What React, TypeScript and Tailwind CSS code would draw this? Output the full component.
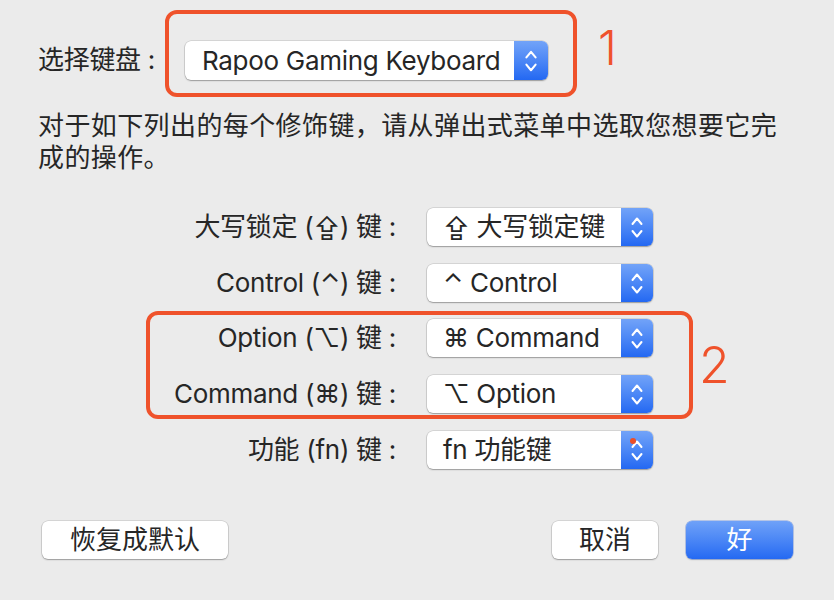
import React from "react";

const FONT = `Inter, "Noto Sans CJK SC", "DejaVu Sans", sans-serif`;

function Stepper({ dot = false, wide = false }: { dot?: boolean; wide?: boolean }) {
  return (
    <div
      className={`relative h-full ${wide ? "w-[34px]" : "w-[32px]"} shrink-0 rounded-r-[6px] bg-gradient-to-b from-[#72a3f8] to-[#2368f2]`}
    >
      <svg viewBox="0 0 32 38" className="absolute inset-0 h-full w-full" fill="none">
        <path d="M11.5 16 L16 10.5 L20.5 16" stroke="white" strokeWidth="2" strokeLinecap="round" strokeLinejoin="round" />
        <path d="M11.5 23 L16 28.5 L20.5 23" stroke="white" strokeWidth="2" strokeLinecap="round" strokeLinejoin="round" />
      </svg>
      {dot ? (
        <span className="absolute left-[9px] top-[7px] h-[6px] w-[6px] rounded-full bg-[#ec4f27]" />
      ) : null}
    </div>
  );
}

function PopUp({ label, className = "" }: { label: string; className?: string }) {
  return (
    <div
      className={`flex h-[38px] items-stretch rounded-[6px] bg-white shadow-[0_0_0_0.5px_rgba(0,0,0,0.18),0_1px_1.5px_rgba(0,0,0,0.28)] ${className}`}
    >
      <div className="flex flex-1 items-center whitespace-nowrap pl-[16px] text-[26px] leading-none tracking-[-0.3px] text-[#262626]">
        {label}
      </div>
      <Stepper dot={label.startsWith("fn")} />
    </div>
  );
}

function Row({ label, value, labelWidth }: { label: string; value: string; labelWidth: string }) {
  return (
    <div className="flex h-[38px] items-center">
      <div
        className={`${labelWidth} whitespace-nowrap pr-[2px] text-right text-[26px] leading-none tracking-[-0.3px] text-[#262626]`}
      >
        {label}
      </div>
      <PopUp label={value} className="ml-[29px] w-[226px]" />
    </div>
  );
}

function Button({ children, primary = false, className = "" }: { children: React.ReactNode; primary?: boolean; className?: string }) {
  return (
    <button
      type="button"
      className={`flex h-[38px] items-center justify-center rounded-[6px] text-[26px] leading-none ${
        primary
          ? "bg-gradient-to-b from-[#6fa1f8] to-[#2469f2] text-white shadow-[0_0_0_0.5px_rgba(30,90,220,0.5),0_1px_1.5px_rgba(0,0,0,0.2)]"
          : "bg-white text-[#262626] shadow-[0_0_0_0.5px_rgba(0,0,0,0.18),0_1px_1.5px_rgba(0,0,0,0.28)]"
      } ${className}`}
    >
      {children}
    </button>
  );
}

export default function App() {
  return (
    <div className="h-[600px] w-[834px] overflow-hidden bg-[#ebebeb]" style={{ fontFamily: FONT }}>
      {/* keyboard picker */}
      <div className="flex items-start pt-[10px]">
        <div className="mt-[31px] w-[165px] whitespace-nowrap pl-[38px] text-[26px] leading-[38px] tracking-[-0.3px] text-[#262626]">
          选择键盘 :
        </div>
        <div className="rounded-[12px] border-4 border-[#ef522b] pb-[13px] pl-[16px] pr-[25px] pt-[27px]">
          <div className="flex h-[39px] w-[363px] items-stretch rounded-[6px] bg-white shadow-[0_0_0_0.5px_rgba(0,0,0,0.18),0_1px_1.5px_rgba(0,0,0,0.28)]">
            <div className="flex flex-1 items-center pl-[17px] text-[26px] leading-none tracking-[-0.3px] text-[#262626]">
              Rapoo Gaming Keyboard
            </div>
            <Stepper wide />
          </div>
        </div>
        <div className="ml-[21px] mt-[14px] text-[48px] font-light leading-none text-[#ef522b]">1</div>
      </div>

      <p className="mt-[13px] w-[798px] pl-[38px] text-[26px] leading-[32px] tracking-[0.4px] text-[#262626]">
        对于如下列出的每个修饰键，请从弹出式菜单中选取您想要它完成的操作。
      </p>

      {/* modifier rows */}
      <div className="mt-[34px] flex flex-col">
        <Row label="大写锁定 (⇪) 键 :" value="⇪ 大写锁定键" labelWidth="w-[398px]" />
        <div className="mt-[18px]">
          <Row label="Control (⌃) 键 :" value="⌃ Control" labelWidth="w-[398px]" />
        </div>
        <div className="mt-[9px] flex items-center">
          <div className="ml-[146px] flex flex-col gap-[18px] rounded-[12px] border-4 border-[#ef522b] pb-[2px] pr-[36px] pt-[4px]">
            <Row label="Option (⌥) 键 :" value="⌘ Command" labelWidth="w-[248px]" />
            <Row label="Command (⌘) 键 :" value="⌥ Option" labelWidth="w-[248px]" />
          </div>
          <div className="ml-[6px] text-[50px] font-light leading-none text-[#ef522b]">2</div>
        </div>
        <div className="mt-[12px]">
          <Row label="功能 (fn) 键 :" value="fn 功能键" labelWidth="w-[398px]" />
        </div>
      </div>

      {/* footer buttons */}
      <div className="mt-[52px] flex items-center pl-[42px]">
        <Button className="w-[186px]">恢复成默认</Button>
        <Button className="ml-auto w-[106px]">取消</Button>
        <Button primary className="ml-[28px] mr-[41px] w-[107px]">
          好
        </Button>
      </div>
    </div>
  );
}
